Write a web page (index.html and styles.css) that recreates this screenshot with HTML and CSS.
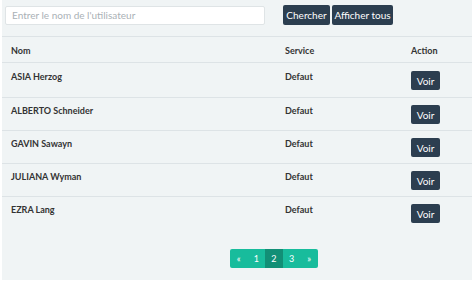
FILE: index.html
```html
<!DOCTYPE html>
<html lang="fr">
<head>
  <meta charset="UTF-8">
  <title>Utilisateurs</title>
  <link rel="stylesheet" href="styles.css">
</head>
<body>
  <div class="panel">
    <form class="search">
      <input class="search-input" type="text" placeholder="Entrer le nom de l'utilisateur">
      <div class="search-actions">
        <button type="button" class="btn">Chercher</button>
        <button type="button" class="btn">Afficher tous</button>
      </div>
    </form>

    <table class="users">
      <thead>
        <tr>
          <th class="col-name">Nom</th>
          <th class="col-service">Service</th>
          <th class="col-action">Action</th>
        </tr>
      </thead>
      <tbody>
        <tr><td>ASIA Herzog</td><td>Defaut</td><td><button class="btn btn-sm">Voir</button></td></tr>
        <tr><td>ALBERTO Schneider</td><td>Defaut</td><td><button class="btn btn-sm">Voir</button></td></tr>
        <tr><td>GAVIN Sawayn</td><td>Defaut</td><td><button class="btn btn-sm">Voir</button></td></tr>
        <tr><td>JULIANA Wyman</td><td>Defaut</td><td><button class="btn btn-sm">Voir</button></td></tr>
        <tr><td>EZRA Lang</td><td>Defaut</td><td><button class="btn btn-sm">Voir</button></td></tr>
      </tbody>
    </table>

    <ul class="pagination">
      <li><a href="#">«</a></li>
      <li><a href="#">1</a></li>
      <li class="active"><a href="#">2</a></li>
      <li><a href="#">3</a></li>
      <li><a href="#">»</a></li>
    </ul>
  </div>
</body>
</html>
```

FILE: styles.css
```css
* {
  margin: 0;
  padding: 0;
  box-sizing: border-box;
}

body {
  background: #ffffff;
  font-family: 'Lato', sans-serif;
  font-size: 9px;
  color: #333;
}

.panel {
  margin: 0 2px;
  height: 280px;
  background: #f0f4f5;
  padding-top: 5px;
}

.search {
  display: flex;
  align-items: center;
  padding-left: 3px;
}

.search-input {
  width: 260px;
  height: 19px;
  border: 1px solid #dfe4e6;
  border-radius: 2px;
  background: #fff;
  padding: 0 6px;
  font-family: 'Lato', sans-serif;
  font-size: 10px;
  color: #333;
}

.search-input::placeholder {
  color: #aab1b6;
}

.search-actions {
  display: flex;
  gap: 2px;
  margin-left: 18px;
}

.btn {
  height: 20px;
  padding: 0;
  border: none;
  border-radius: 2px;
  background: #2c3e50;
  color: #fff;
  font-family: 'Lato', sans-serif;
  font-size: 10px;
  white-space: nowrap;
  cursor: pointer;
}

.search-actions .btn:first-child {
  width: 47px;
}

.search-actions .btn:last-child {
  width: 61px;
}

.btn-sm {
  display: block;
  width: 29px;
  height: 19px;
  font-size: 10px;
}

.users {
  width: 470px;
  margin-top: 11px;
  border-collapse: collapse;
  table-layout: fixed;
}

.users th,
.users td {
  text-align: left;
  vertical-align: top;
  padding: 7px 9px 6px;
  border-top: 1px solid #dde3e6;
  font-weight: 700;
  line-height: 11px;
}

.users th {
  padding: 8px 9px 6px;
  border-bottom: 1px solid #dde3e6;
}

.users tbody tr:first-child td {
  padding-top: 8px;
  padding-bottom: 7px;
  border-top: none;
}

.col-name {
  width: 274px;
}

.col-service {
  width: 126px;
}

.col-action {
  width: 70px;
}

.pagination {
  list-style: none;
  display: flex;
  margin: 20px 0 0 228px;
}

.pagination li a {
  display: block;
  width: 17.6px;
  height: 19px;
  line-height: 19px;
  text-align: center;
  background: #18bc9c;
  color: #fff;
  text-decoration: none;
  font-size: 9px;
}

.pagination li:first-child a {
  border-radius: 2px 0 0 2px;
}

.pagination li:last-child a {
  border-radius: 0 2px 2px 0;
}

.pagination li.active a {
  background: #128f76;
}
```
